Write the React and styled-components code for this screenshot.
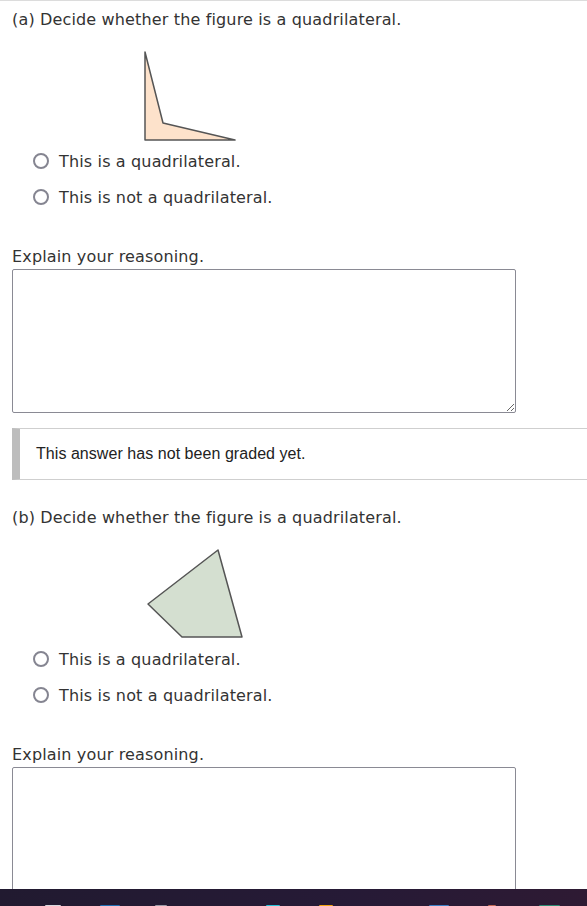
import React from "react";
import styled, { createGlobalStyle } from "styled-components";

const GlobalStyle = createGlobalStyle`
  html, body {
    margin: 0;
    padding: 0;
    background: #fff;
  }
  body {
    font-family: "DejaVu Sans", Verdana, sans-serif;
    color: #333;
  }
`;

const Page = styled.div`
  border-top: 1px solid #dcdcdc;
  padding: 9px 0 40px 12px;
  display: flex;
  flex-direction: column;
`;

const Question = styled.div`
  display: flex;
  flex-direction: column;
`;

const Prompt = styled.div`
  font-size: 16px;
  line-height: 20px;
  letter-spacing: 0.15px;
  margin-top: ${(p) => p.$top || 0}px;
`;

const Figure = styled.svg`
  display: block;
  margin: 15px 0 0 123px;
`;

const Choices = styled.div`
  display: flex;
  flex-direction: column;
  margin-left: 21px;
`;

const Choice = styled.label`
  height: 36px;
  display: flex;
  align-items: center;
  gap: 10px;
  font-size: 16px;
  letter-spacing: 0.15px;
`;

const Radio = styled.input.attrs({ type: "radio" })`
  appearance: none;
  box-sizing: border-box;
  width: 16px;
  height: 16px;
  margin: 0;
  border: 2px solid #858591;
  border-radius: 50%;
  background: #fff;
  flex-shrink: 0;

  &:checked {
    box-shadow: inset 0 0 0 3px #fff;
    background: #1a73e8;
  }
`;

const Label = styled.div`
  font-size: 16px;
  line-height: 20px;
  letter-spacing: 0.15px;
  margin-top: 32px;
`;

const Answer = styled.textarea`
  box-sizing: border-box;
  width: 504px;
  height: 144px;
  margin-top: 2px;
  border: 1px solid #8a8a94;
  border-radius: 2px;
  display: block;
`;

const Feedback = styled.div`
  margin-top: 15px;
  height: 52px;
  box-sizing: border-box;
  border-top: 1px solid #cfcfcf;
  border-bottom: 1px solid #cfcfcf;
  border-left: 8px solid #bdbdbd;
  display: flex;
  align-items: center;
  padding-left: 16px;
  font-family: "Liberation Sans", Arial, sans-serif;
  font-size: 16px;
  color: #222;
  letter-spacing: 0.05px;
`;

const Taskbar = styled.div`
  position: fixed;
  left: 0;
  right: 0;
  bottom: 0;
  height: 17px;
  background: linear-gradient(90deg, #211a30 0%, #261a36 60%, #2e1a33 100%);
`;

const TrayIcon = styled.span`
  position: absolute;
  bottom: 0;
  left: ${(p) => p.$x}px;
  width: ${(p) => p.$w}px;
  height: 1px;
  background: ${(p) => p.$c};
  border-radius: ${(p) => (p.$round ? "8px 8px 0 0" : "1px 1px 0 0")};
`;

const trayIcons = [
  { x: 45, w: 16, c: "#d8d8de" },
  { x: 100, w: 20, c: "#1f6fb4" },
  { x: 155, w: 12, c: "#9a9aa6" },
  { x: 266, w: 14, c: "#25c2d9", round: true },
  { x: 319, w: 14, c: "#f2a30f", round: true },
  { x: 429, w: 20, c: "#3a7fc6" },
  { x: 488, w: 8, c: "#c26a55" },
  { x: 539, w: 21, c: "#2b8a72" },
];

function QuestionBlock({ part, top, figure }) {
  return (
    <Question>
      <Prompt $top={top}>({part}) Decide whether the figure is a quadrilateral.</Prompt>
      {figure}
      <Choices>
        <Choice>
          <Radio name={`q-${part}`} />
          This is a quadrilateral.
        </Choice>
        <Choice>
          <Radio name={`q-${part}`} />
          This is not a quadrilateral.
        </Choice>
      </Choices>
      <Label>Explain your reasoning.</Label>
      <Answer />
    </Question>
  );
}

export default function App() {
  return (
    <>
      <GlobalStyle />
      <Page>
        <QuestionBlock
          part="a"
          figure={
            <Figure width="110" height="98" viewBox="0 0 110 98">
              <polygon
                points="10,7 28,78 100,95 10,95"
                fill="#fde2cb"
                stroke="#555"
                strokeWidth="1.5"
                strokeLinejoin="round"
              />
            </Figure>
          }
        />
        <Feedback>This answer has not been graded yet.</Feedback>
        <QuestionBlock
          part="b"
          top={28}
          figure={
            <Figure width="110" height="98" viewBox="0 0 110 98">
              <polygon
                points="83,7 107,94 47,94 13,61"
                fill="#d4dfd0"
                stroke="#555"
                strokeWidth="1.5"
                strokeLinejoin="round"
              />
            </Figure>
          }
        />
      </Page>
      <Taskbar>
        {trayIcons.map((t) => (
          <TrayIcon key={t.x} $x={t.x} $w={t.w} $c={t.c} $round={t.round} />
        ))}
      </Taskbar>
    </>
  );
}
